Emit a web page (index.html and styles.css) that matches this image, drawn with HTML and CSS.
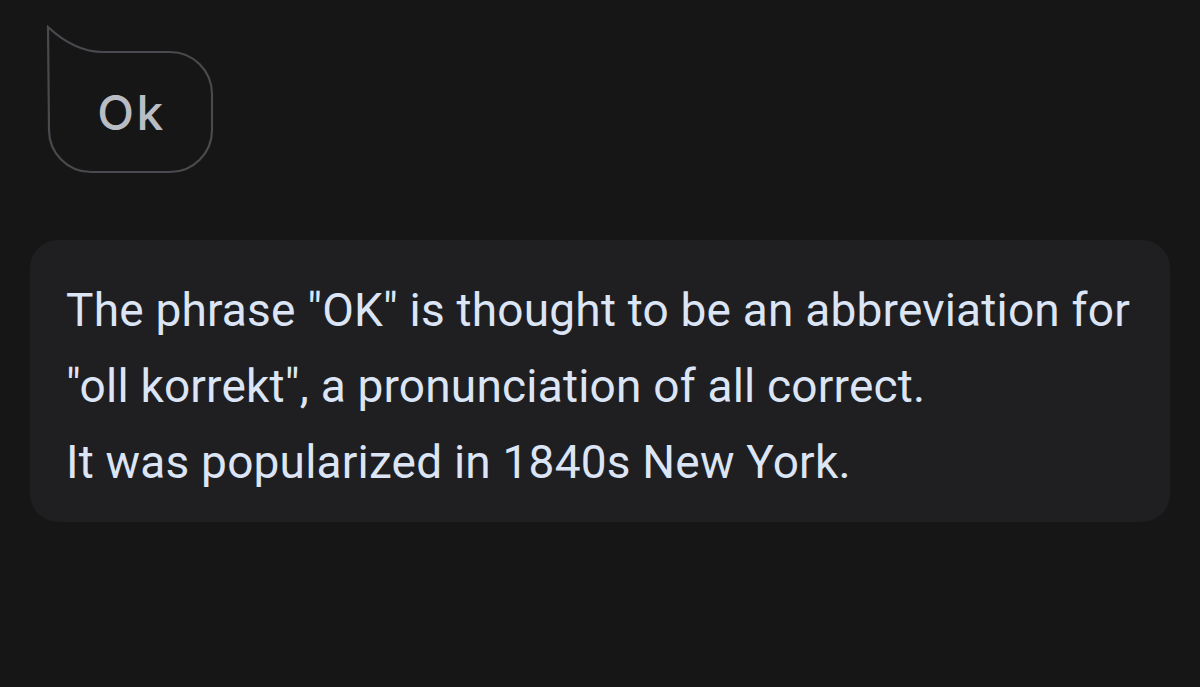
FILE: index.html
```html
<!DOCTYPE html>
<html>
<head>
<meta charset="utf-8">
<link rel="stylesheet" href="styles.css">
</head>
<body>
<div class="page">
  <div class="bubble">
    <svg class="bubble-outline" width="170" height="150" viewBox="0 0 170 150">
      <path d="M3 2 L4 105 A42 42 0 0 0 46 147 L125 147 A42 42 0 0 0 167 105 L167 69 A42 42 0 0 0 125 27 L58 27 C36 27 18 16 3 2 Z" fill="none" stroke="#4a4a4e" stroke-width="2.2"/>
    </svg>
    <span class="bubble-text">Ok</span>
  </div>
  <div class="card">
    <p class="answer">The phrase "OK" is thought to be an abbreviation for<br>"oll korrekt", a pronunciation of all correct.<br>It was popularized in 1840s New York.</p>
  </div>
</div>
</body>
</html>
```
FILE: styles.css
```css
html, body {
  margin: 0;
  padding: 0;
  background: #161617;
}
.page {
  width: 1200px;
  height: 687px;
  padding: 25px 30px 0 30px;
  box-sizing: border-box;
  display: flex;
  flex-direction: column;
}
.bubble {
  position: relative;
  width: 170px;
  height: 150px;
  margin-left: 15px;
  display: flex;
  align-items: center;
  justify-content: center;
}
.bubble-outline {
  position: absolute;
  left: 0;
  top: 0;
}
.bubble-text {
  position: relative;
  font-family: Inter, "Open Sans", sans-serif;
  font-size: 48px;
  font-weight: 500;
  letter-spacing: 2.5px;
  color: #b9bcc3;
  margin-top: 24px;
  margin-left: 3px;
}
.card {
  margin-top: 65px;
  width: 1140px;
  height: 282px;
  box-sizing: border-box;
  background: #1f1f22;
  border-radius: 28px;
  padding: 32px 0 0 36px;
}
.answer {
  margin: 0;
  font-family: Roboto, sans-serif;
  font-size: 46px;
  letter-spacing: 0.2px;
  line-height: 76px;
  color: #dce5f6;
}
```
